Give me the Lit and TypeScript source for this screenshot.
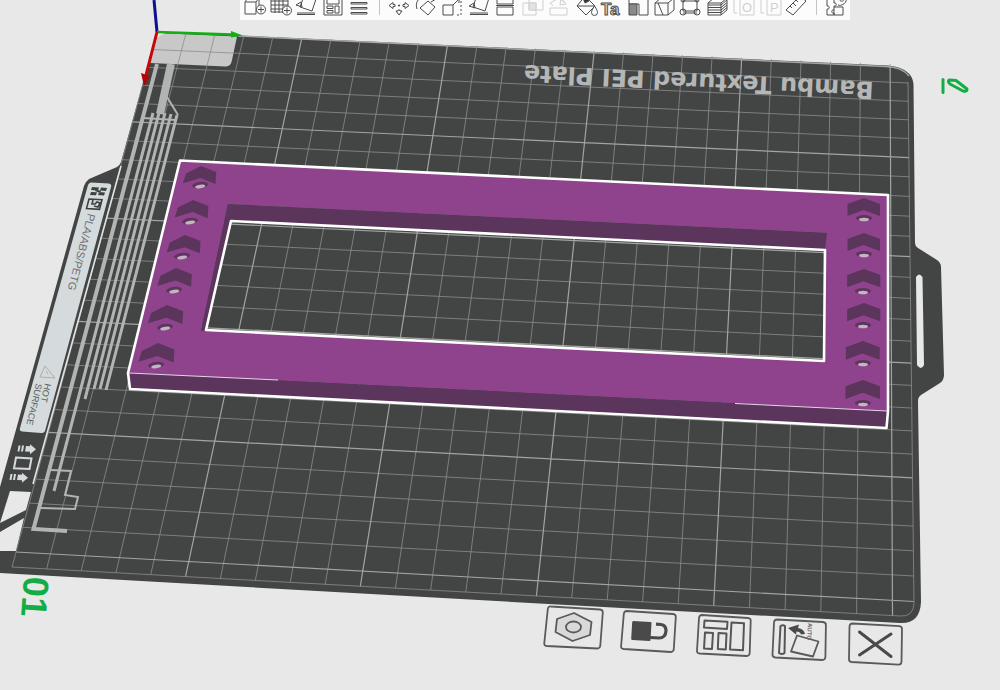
import { LitElement, html, svg, css, SVGTemplateResult } from "lit";
import { customElement } from "lit/decorators.js";

type Pt = [number, number];

/* Screen corners of the 256 mm bed: origin, right, far right, far left. */
const BED = 256;
const CORNERS: Pt[] = [[157, 32], [908, 65], [914, 617], [12, 567]];

function projector(c: Pt[]) {
  const [[x0, y0], [x1, y1], [x2, y2], [x3, y3]] = c;
  const dx1 = x1 - x2, dx2 = x3 - x2, sx = x0 - x1 + x2 - x3;
  const dy1 = y1 - y2, dy2 = y3 - y2, sy = y0 - y1 + y2 - y3;
  const det = dx1 * dy2 - dx2 * dy1;
  const g = (sx * dy2 - dx2 * sy) / det;
  const h = (dx1 * sy - sx * dy1) / det;
  const a = x1 - x0 + g * x1, b = x3 - x0 + h * x3;
  const d = y1 - y0 + g * y1, e = y3 - y0 + h * y3;
  return (u: number, v: number): Pt => {
    const s = u / BED, t = v / BED, w = g * s + h * t + 1;
    return [(a * s + b * t + x0) / w, (d * s + e * t + y0) / w];
  };
}
const project = projector(CORNERS);

function segment(from: Pt, to: Pt): string {
  const [a, b] = [project(...from), project(...to)];
  return `M${a[0].toFixed(1)} ${a[1].toFixed(1)}L${b[0].toFixed(1)} ${b[1].toFixed(1)}`;
}

function gridPath(bold: boolean): string {
  let d = "";
  for (let p = 10; p <= 250; p += 10) {
    if ((p % 50 === 0) !== bold) continue;
    d += segment([p, 0], [p, BED]) + segment([0, p], [BED, p]);
  }
  return d;
}

/* Crest of every hex pocket, eye below it, and size. */
const LEFT_POCKETS = [
  { x: 201, y: 166, ex: 200, ey: 185, s: 1 },
  { x: 193, y: 200, ex: 190, ey: 221, s: 1.01 },
  { x: 185, y: 235, ex: 182, ey: 256, s: 1.02 },
  { x: 176, y: 268, ex: 174, ey: 290, s: 1.04 },
  { x: 167, y: 305, ex: 165, ey: 327, s: 1.06 },
  { x: 158, y: 343, ex: 156, ey: 365, s: 1.08 },
];
const RIGHT_POCKETS = [
  { x: 864, y: 198, ex: 864, ey: 218, s: 1 },
  { x: 864, y: 233, ex: 864, ey: 254, s: 1 },
  { x: 864, y: 269, ex: 863, ey: 291, s: 1.02 },
  { x: 864, y: 303, ex: 863, ey: 325, s: 1.02 },
  { x: 863, y: 341, ex: 863, ey: 363, s: 1.04 },
  { x: 863, y: 380, ex: 863, ey: 403, s: 1.06 },
];

interface Tool { name: string; art: SVGTemplateResult; off?: boolean }

const TOOLS: (Tool | null)[] = [
  { name: "Add object", art: svg`<path d="M4 10h11v12H4zM4 10l3-4h11l-3 4M18 6v9"/><circle cx="20" cy="17.500" r="4.500" class="paper"/><path d="M17 17.500h6M20 14.500v6"/>` },
  { name: "Add plate", art: svg`<path d="M3 5h17v15H3zM7 5v16M11 5v16M15 5v16M3 9h17M3 13h17M3 17h17"/><circle cx="19" cy="18.500" r="4.500" class="paper"/><path d="M16 18.500h6M19 15.500v6"/>` },
  { name: "Auto orient", art: svg`<path d="M10 4l12 3-4 12-12-4zM3 22.500h18M3 21h18M2 13l5-3 1 5z"/>` },
  { name: "Arrange", art: svg`<path d="M3 3h18v20H3zM6 6h12v6H6zM6 14h6v2.500H6zM6 18.500h6V21H6zM14 14h4v7h-4z"/>` },
  { name: "Variable layer height", art: svg`<path d="M4 6h16v1.500H4zM4 10.500h16V12H4zM4 15.500h16V17H4zM4 20.500h16V22H4z"/>` },
  null,
  { name: "Move", art: svg`<path d="M12 23l-3-4h2v-1h2v1h2zM2 13.500l4-3v2h2v2H6v2zM22 13.500l-4-3v2h-2v2h2v2zM12 3l-3 4h6zM12 12.500v2M11 13.500h2"/>` },
  { name: "Rotate", art: svg`<path d="M14 9l7 6-7 8-8-7zM3 17C1 11 4 6 9 5M17 3l5 4-5 3"/>` },
  { name: "Scale", art: svg`<path d="M3 13h10v10H3zM13 13l6-6M19 11V7h-4"/><path class="dash" d="M6 4h15v19h-6"/>` },
  { name: "Lay on face", art: svg`<path d="M10 3l12 3-4 13-12-4zM3 22.500h18M3 21h18M2 14l5-3 1 5z"/>` },
  { name: "Cut", art: svg`<path d="M4 3h16v9H4zM4 15h16v8H4zM3 13.500h18"/>` },
  { name: "Boolean", off: true, art: svg`<path d="M3 11h13v12H3zM9 5h14v13H9z"/><path class="tint" d="M9 11h7v7H9z"/>` },
  { name: "Support painting", off: true, art: svg`<path d="M4 16h17v7H4zM7 14l-3-3 9-5 6 5M15 6l5 6-6 1z"/>` },
  { name: "Colour painting", art: svg`<path d="M12 4l10 10-9 9-9-9zM4 14h17M9 4l4 6"/><path class="solid" d="M10 6l3-2 3 5-4 2z"/><path class="paper" d="M21.500 14c2 3 3 5 3 6.500a3 3 0 0 1-6 0c0-1.500 1-3.500 3-6.500z"/>` },
  { name: "Text", art: svg`<text class="glyph" x="2" y="23">Ta</text>` },
  { name: "Fuzzy skin", art: svg`<path d="M3 4h19v19H13V12H3z"/><path class="hatch" d="M3 12h8v11H3z"/>` },
  { name: "Mesh", art: svg`<path d="M3 11h13v12H3zM3 11l6-5h13l-6 5M22 6v12l-6 5M6 11l5 12"/>` },
  { name: "Seam", art: svg`<path d="M5 9h14v10H5zM5 21h14M5 9V5M19 9V5"/><circle cx="5" cy="20" r="3"/><circle cx="19" cy="20" r="3"/><circle cx="5" cy="8" r="2"/><circle cx="19" cy="8" r="2"/>` },
  { name: "Layers", art: svg`<path d="M3 11h13v12H3zM3 11l6-5h13l-6 5M22 6v12l-6 5M3 13h13l6-5M3 15.500h13l6-5M3 18h13l6-5M3 20.500h13l6-5"/>` },
  { name: "Outline", off: true, art: svg`<path d="M9 7h14v16H9zM6 21H3V6"/><text class="small-glyph" x="11" y="20">O</text>` },
  { name: "Profile", off: true, art: svg`<path d="M9 7h14v16H9zM6 21H3V6"/><text class="small-glyph" x="12" y="20">P</text>` },
  { name: "Measure", art: svg`<path d="M2 18L16 4l6 5L9 23zM6 14l2 2M9 11l3 3M12 8l2 2M15 5l3 3"/>` },
  null,
  { name: "Assembly view", art: svg`<path d="M2 7h7v4c3-1 3 4 0 3v9H2v-6c3 1 3-4 0-3zM9 15h9v8H9v-2c-3 1-3-4 0-3M9 7h6c-1 3 4 3 4 0M20 6c4 2-2 9-7 7"/>` },
];

interface PlateAction { name: string; x: number; y: number; art: SVGTemplateResult }

const ACTIONS: PlateAction[] = [
  {
    name: "Plate settings", x: 543, y: 604,
    art: svg`<path class="frame" d="M551 606.500l49 3q3 .3 2.800 3l-2.500 33q-.3 3-3 3l-50.500-2.500q-3-.3-2.500-3l3.500-34q.3-3 3.200-2.500z"/>
      <path class="frame fill" d="M574 613l17.500 9-1.500 13-17.500 6-17-9 1.500-13z"/><ellipse class="frame" cx="573.500" cy="627" rx="7.500" ry="5.500"/>`,
  },
  {
    name: "Lock plate", x: 619, y: 608,
    art: svg`<path class="frame" d="M627 611l46 3q3 .3 2.800 3l-2 32q-.3 3-3 3l-47-3q-3-.3-2.700-3l2.700-32q.3-3 3.200-3z"/>
      <path class="solid" d="M633 621l17.500 1q1 0 1 1l-1 17q0 1-1 1l-17-1q-1.500 0-1.300-1.500l1-16.500z"/><path class="heavy" d="M650 637.500l9 .5q6.500 0 7-7 0-6-5-6.500l-5-.3"/>`,
  },
  {
    name: "Arrange plate", x: 695, y: 613,
    art: svg`<path class="frame" d="M702 615l46 3q3 .3 2.700 3l-1 32q-.3 3-3 3l-47-2.500q-3-.3-2.700-3l2-32.500q.3-3 3-3z"/>
      <path class="bar" d="M704.500 620.500l23 1.200-.5 7.300-23-1.500zM731.500 622.500l12.500.7-1 27-13-.7zM705 632.500l8 .4-1 16-8-.4zM718.500 633l8 .4-.7 16-8-.4z"/>`,
  },
  {
    name: "Auto orient plate", x: 770, y: 617,
    art: svg`<path class="frame" d="M777 619.500l46 2.500q3 .3 2.900 3l-.5 32q-.3 3-3 3l-47-2.500q-3-.3-2.900-3l1.500-32q.3-3 3-3z"/>
      <path class="bar" d="M780.500 626q2.500-1.500 4.500 0l-.5 27q-2.500 2-5.500 0z"/><path class="frame" d="M797 635.500l21.500 6-5.500 15-22-5z"/>
      <path class="solid" d="M788 628l11-3.500-1 3.500q6 1 7 6l-4 .5q-1-3-4.500-3l-.5 3z"/><text class="auto" transform="translate(808 623) rotate(93)">AUTO</text>`,
  },
  {
    name: "Delete plate", x: 846, y: 621,
    art: svg`<path class="frame" d="M852.500 623.500l47 2.700q2.500.3 2.500 3l-.5 32.500q-.2 3-3 3l-47-2.700q-2.700-.3-2.500-3l.5-32.500q.2-3 3-3z"/>
      <path class="cross" d="M859.500 632l31.500 24.500M891 634l-31.500 21"/>`,
  },
];

@customElement("slicer-toolbar")
export class SlicerToolbar extends LitElement {
  static styles = css`
    :host { display: block; }
    .bar { display: flex; align-items: flex-end; height: 20px; overflow: hidden; background: #fcfcfc; }
    .tool { flex: 1 1 0; min-width: 0; display: flex; justify-content: center; padding: 0 0 4px; border: 0; background: none; }
    .tool:disabled { opacity: 0.25; }
    .rule { width: 14px; height: 20px; display: flex; justify-content: center; }
    .rule::before { content: ""; width: 1px; height: 15px; background: #c4c4c4; }
    .icon { width: 24px; height: 24px; flex: none; overflow: visible; fill: none; stroke: #4c4c4c; stroke-width: 1; stroke-linejoin: round; }
    .paper { fill: #fcfcfc; }
    .solid { fill: #333; }
    .tint { fill: #999; }
    .hatch { fill: #8a8a8a; }
    .dash { stroke-dasharray: 2 2; }
    .glyph { font: bold 17px "Liberation Sans", sans-serif; fill: #d8d8d8; stroke-width: 1; }
    .small-glyph { font: 13px "Liberation Sans", sans-serif; fill: #4c4c4c; stroke: none; }
  `;
  render() {
    return html`<div class="bar" role="toolbar" aria-label="Tools">
      ${TOOLS.map((t) => t
        ? html`<button class="tool" type="button" aria-label=${t.name} ?disabled=${!!t.off}><svg class="icon" viewBox="0 0 24 24">${t.art}</svg></button>`
        : html`<span class="rule"></span>`)}
    </div>`;
  }
}

@customElement("app-root")
export class AppRoot extends LitElement {
  static styles = css`
    :host { display: grid; grid-template-columns: 24fr 61fr 15fr; grid-template-rows: auto 1fr; height: 100vh; overflow: hidden; background: #e8e8e8; font-family: "Liberation Sans", sans-serif; }
    .scene { grid-area: 1 / 1 / 3 / 4; width: 100%; height: 100vh; display: block; }
    .tools { grid-area: 1 / 2; z-index: 1; align-self: start; }
    .plate { fill: #434544; }
    .ground { fill: #e8e8e8; }
    .rim { fill: none; stroke: #a4a6a5; stroke-width: 1.5; }
    .patch { fill: #c8c8c8; }
    .grid { fill: none; stroke: #8b8d8c; stroke-width: 0.8; }
    .grid-bold { fill: none; stroke: #a2a4a3; stroke-width: 1.2; }
    .trace { fill: none; stroke: #b2b4b3; stroke-width: 3; }
    .trace-wide { fill: none; stroke: #b2b4b3; stroke-width: 8; }
    .trace-mid { fill: none; stroke: #b2b4b3; stroke-width: 4; }
    .trace-thin { fill: none; stroke: #b2b4b3; stroke-width: 2; }
    .panel { fill: #d5dadc; }
    .edge { fill: none; stroke: #e2e4e4; stroke-width: 1.6; }
    .mark { fill: #3e4140; }
    .mark-line { fill: none; stroke: #3e4140; stroke-width: 1.6; }
    .warn { fill: none; stroke: #9fa3a4; stroke-width: 0.8; }
    .pale { fill: #d5dadc; }
    .pale-line { fill: none; stroke: #d5dadc; stroke-width: 2; }
    .material { font-size: 11px; fill: #6c7071; }
    .caution { font-size: 9px; fill: #565a5b; }
    .brand { font: bold 24px "DejaVu Sans", sans-serif; fill: #b5b7b6; }
    .number { font: bold 36px "Liberation Sans", sans-serif; fill: #12ad45; }
    .pencil { fill: none; stroke: #12ad45; stroke-width: 3; stroke-linecap: round; stroke-linejoin: round; }
    .top-face { fill: #8f438c; }
    .side { fill: #5b355c; }
    .outline { fill: none; stroke: #fff; stroke-width: 2.6; stroke-linejoin: round; }
    .sheen { fill: none; stroke: #e6d3e6; stroke-width: 1; }
    .glint { fill: #c4b4c4; }
    .x-axis { stroke: #c40808; fill: #b00606; stroke-width: 3; }
    .y-axis { stroke: #12b012; fill: #12b012; stroke-width: 2.6; }
    .z-axis { stroke: #10108c; stroke-width: 3; }
    .flat { stroke: none; }
    .action { display: block; width: 62px; height: 48px; padding: 0; border: 0; background: none; }
    .art { display: block; width: 62px; height: 48px; }
    .frame { fill: none; stroke: #5a5a5a; stroke-width: 1.8; stroke-linejoin: round; }
    .fill { fill: #d9d9d9; }
    .solid { fill: #4a4a4a; }
    .bar { fill: none; stroke: #565656; stroke-width: 2; stroke-linejoin: round; }
    .heavy { fill: none; stroke: #4a4a4a; stroke-width: 3.2; }
    .cross { fill: none; stroke: #4a4a4a; stroke-width: 3; stroke-linecap: round; }
    .auto { font: bold 6px "Liberation Sans", sans-serif; fill: #6a6a6a; }
  `;

  private bed() {
    return svg`
      <path class="plate" d="M157 32L238 35.500L888 65.500Q912 68 913.500 84L915 243Q915 246 918 248L937 260Q941 263 941 267L944 375Q944 380 940 383L921 395Q918 397 918 401L921 602Q920 624 900 623L530 603L0 573V487L84 186Q85 182 89 179L117 167Q120 165 121 162z"/>
      <path class="ground" d="M10 491L31 492L26 510L0 523zM0 532L24 518L16 551L0 551zM157 31L171 32Q160 34 156 41z"/>
      <path class="ground" d="M916 277q3-5 6.500 0l1.500 88q-3 6-7 0z"/>
      <path class="rim" d="M238 36L886 66.500Q902 67 909 76"/>
      <path class="patch" d="M155 42Q158 33.500 168 33.500L237 36.500L232 60Q231 67 225 66.500L150 63z"/>
      <path class="grid" d=${gridPath(false)}></path>
      <path class="grid-bold" d=${gridPath(true)}></path>
      <path class="grid" d="M908 82L914 604Q913 617 900 616L12 567L154 43"/>`;
  }

  private prints() {
    return svg`
      <path class="trace-mid" d="M157 64L33.500 529L67 531"/>
      <path class="trace-wide" d="M171 64L160 114"/>
      <path class="trace" d="M153 113L54 491M159 113L85 399M165 113L94 389M171 114L100 389M177 115L106 390"/>
      <path class="trace-thin" d="M167 97L178 115M143 118L176 120M51 470L71 471L65 495L78 497L75 509L41 508"/>
      <path class="edge" d="M121 166L33 484"/>
      <path class="panel" d="M91 182.500L109 183.500Q112 184 111 187L45 431Q44 433.500 41 433L22 431.500Q19 431 20 428L88 185Q89 182.500 91 182.500z"/>
      <path class="mark" d="M92 187l7 .5-1 3-7-.5zM101 187.500l6 .4-1 3-6-.4zM91 192l6 .3-1 3-6-.4zM99 192l6 .5-1 3-6-.5zM96 189l5 2-1 2-5-2z"/>
      <path class="mark-line" d="M89 199l13 .8-2.500 9.500-13-.8zM93 200l-1 4h3l2-2 3 1-2 4-4-1"/>
      <path class="warn" d="M40 377L45 366L55 378z"/><path class="warn" d="M46 371l2 3"/>
      <text class="material" transform="translate(88 213) rotate(105)">PLA/ABS/PETG</text>
      <text class="caution" transform="translate(45 383) rotate(103)">HOT</text>
      <text class="caution" transform="translate(36 383) rotate(103)">SURFACE</text>
      <path class="pale" d="M26 446l4 .2v-2l6 5-6 5v-2.500l-5-.2zM22 445.500l2 .1-1 6h-2zM18.500 445.500l2 .1-1 6h-2zM18 474.500l4 .2v-2l6 5-6 5v-2.500l-5-.2zM14 474l2 .1-1 6h-2zM10.500 474l2 .1-1 6h-2z"/>
      <path class="pale-line" d="M16 457.500l15.500 1-2 10.500-15.500-.8z"/>
      <text class="brand" transform="translate(874 82) rotate(182.800)">Bambu Textured PEI Plate</text>
      <text class="number" transform="translate(24 576) rotate(94)">01</text>
      <path class="pencil" d="M943 79.500V92.500M949.500 80L956 80.500L967 89Q967.500 92 963 91L950 84Q947 81 949.500 80z"/>`;
  }

  private model() {
    const chevron = (lean: number) =>
      `M${lean - 16.5} ${6 + lean}L0 0L${16 - lean / 2} 6L${16 - lean} 18L-0.500 12L${-16.5 - lean} ${18 - lean / 2}z`;
    const pocket = (p: { x: number; y: number; ex: number; ey: number; s: number }, lean: number) => svg`
      <path class="side" transform="translate(${p.x} ${p.y}) scale(${p.s})" d=${chevron(lean)}></path>
      <g transform="translate(${p.ex} ${p.ey}) rotate(${-lean * 5})">
        <ellipse class="side" rx="8" ry="3"></ellipse>
        <ellipse class="glint" cy="1.500" rx="5" ry="1.800"></ellipse>
      </g>`;
    return svg`
      <path class="top-face" fill-rule="evenodd" d="M180 161L888 195V411L128 373zM228 204L201 331L824 361L827 233z"/>
      <path class="side" d="M128 373L888 411L887 428L130 389zM228 204L827 233L825 250L231 221L206 330L201 331z"/>
      <path class="top-face" d="M827 233L825 250L824 361L828 361zM201 331L206 330L824 361L824 364z"/>
      <path class="outline" d="M180 160.500L888 195V411L886.500 428L130 389L128 373zM231 221L825 250L824 361L206 330z"/>
      <path class="sheen" d="M129 373L278 380M735 403.500L887 411"/>
      ${LEFT_POCKETS.map((p) => pocket(p, 1.5))}
      ${RIGHT_POCKETS.map((p) => pocket(p, 0))}`;
  }

  private axes() {
    return svg`
      <path class="z-axis" d="M154 0L157 32"/>
      <path class="y-axis" d="M157 32L232 34.500"/><path class="y-axis flat" d="M231 31L243 35.500L231 37.500z"/>
      <path class="x-axis" d="M157 32L146 75"/><path class="x-axis flat" d="M141 73L150 76L144 86z"/>`;
  }

  render() {
    return html`
      <svg class="scene" viewBox="0 0 1000 690" preserveAspectRatio="xMidYMin slice" aria-label="Build plate">
        ${this.bed()}${this.prints()}${this.model()}${this.axes()}
        ${ACTIONS.map((a) => svg`<foreignObject x=${a.x} y=${a.y} width="62" height="48">${html`
          <button class="action" type="button" aria-label=${a.name}><svg class="art" viewBox="${a.x} ${a.y} 62 48">${a.art}</svg></button>`}</foreignObject>`)}
      </svg>
      <slicer-toolbar class="tools"></slicer-toolbar>`;
  }
}
